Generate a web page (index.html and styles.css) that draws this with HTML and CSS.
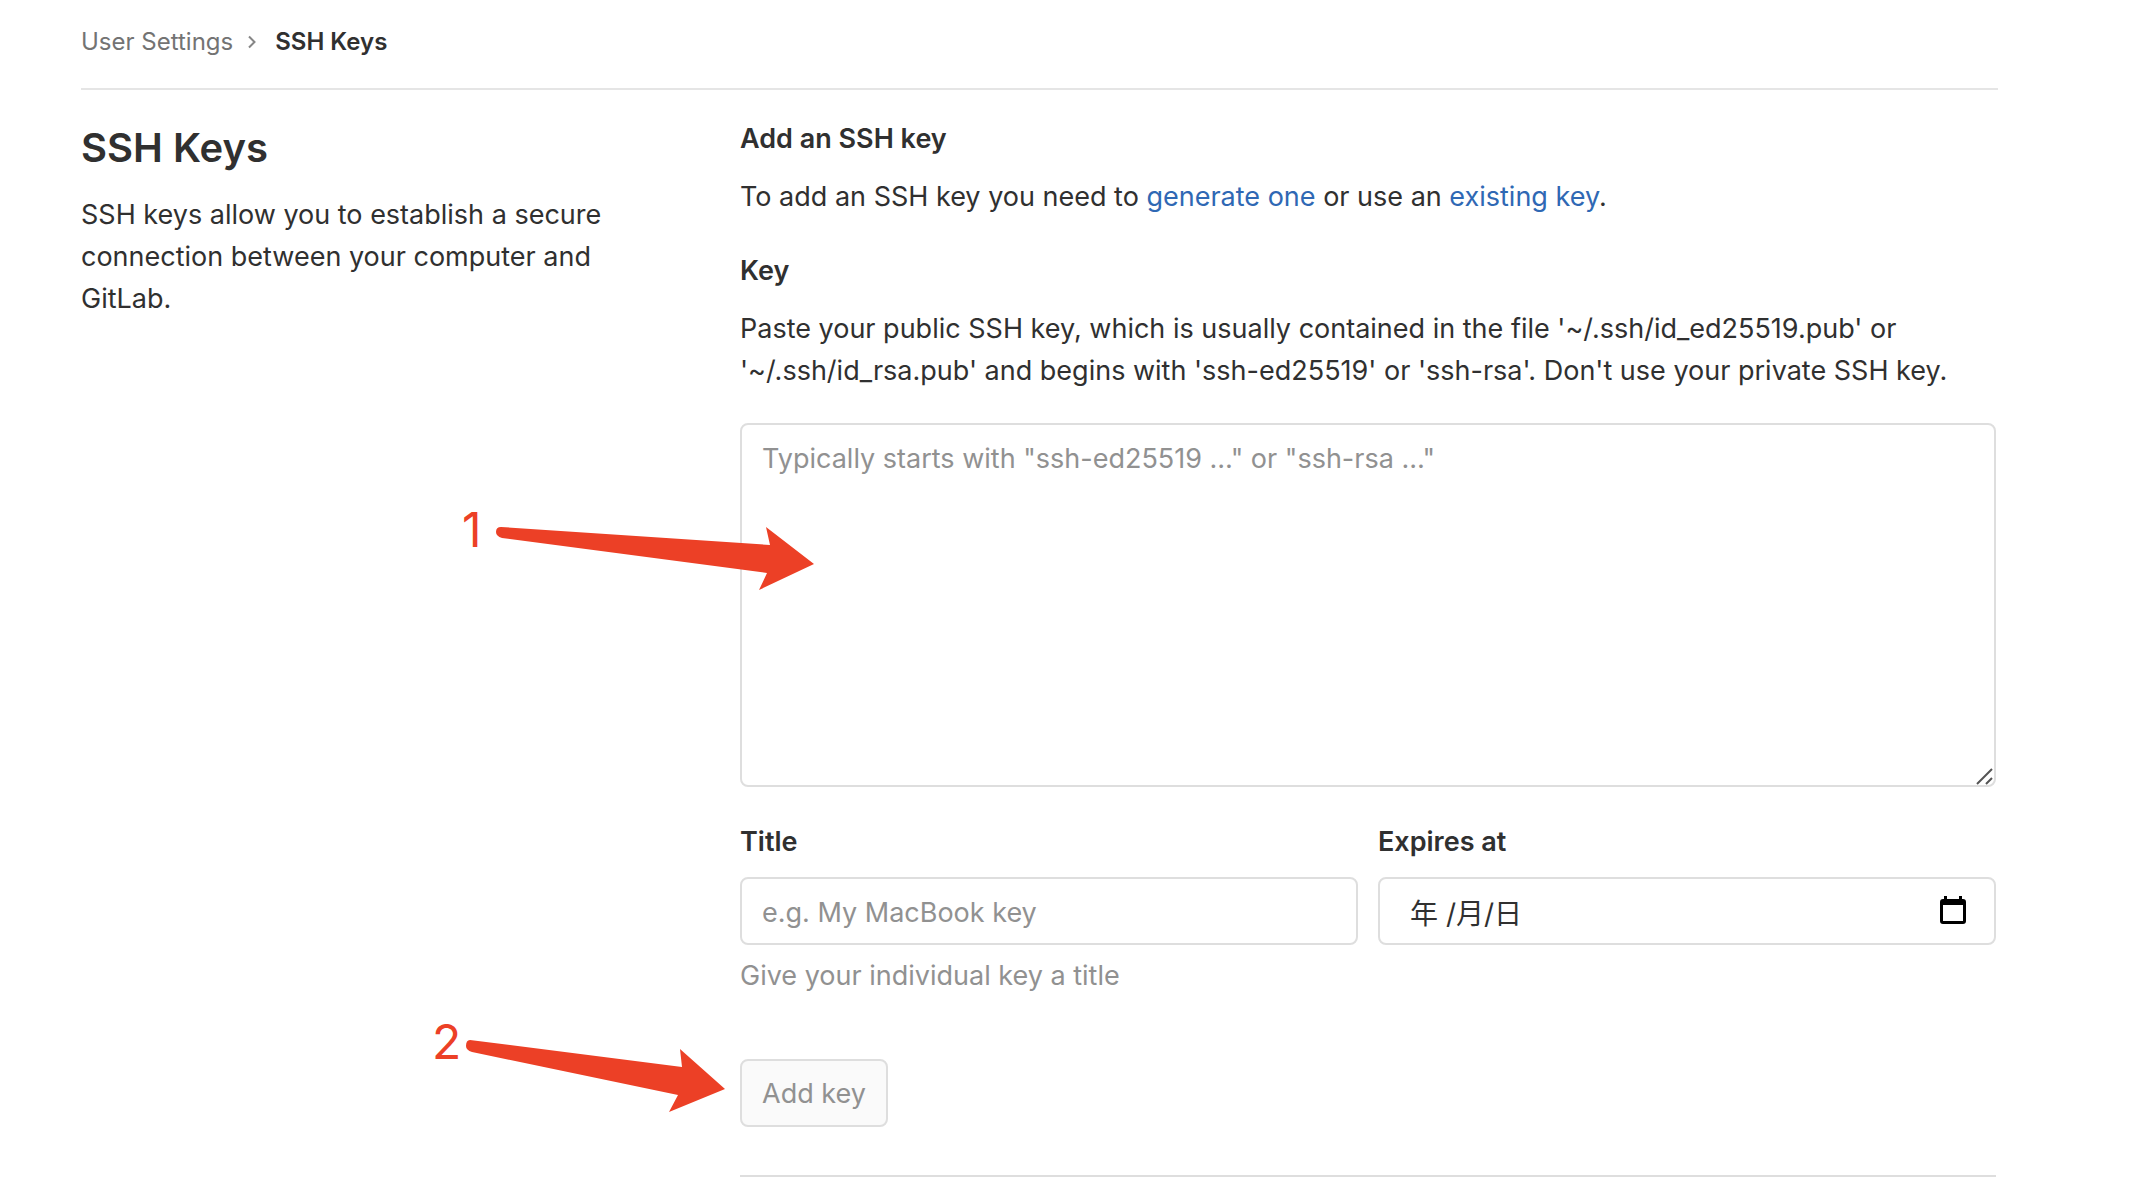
FILE: index.html
```
<!DOCTYPE html>
<html lang="en">
<head>
  <meta charset="UTF-8">
  <title>SSH Keys · User Settings</title>
  <link rel="stylesheet" href="styles.css">
</head>
<body>
  <div class="container">
    <nav class="breadcrumbs">
      <a href="#">User Settings</a>
      <svg class="chevron" viewBox="0 0 10 14" width="10" height="14"><path d="M2 1.5 L7.5 7 L2 12.5"/></svg>
      <a href="#" class="current">SSH Keys</a>
    </nav>

    <main class="settings">
      <aside class="intro">
        <h1>SSH Keys</h1>
        <p>SSH keys allow you to establish a secure connection between your computer and GitLab.</p>
      </aside>

      <section class="content">
        <h2>Add an SSH key</h2>
        <p class="lead">To add an SSH key you need to <a href="#">generate one</a> or use an <a href="#">existing key</a>.</p>

        <form onsubmit="return false;">
          <label for="key">Key</label>
          <p class="hint">Paste your public SSH key, which is usually contained in the file '~/.ssh/id_ed25519.pub' or '~/.ssh/id_rsa.pub' and begins with 'ssh-ed25519' or 'ssh-rsa'. Don't use your private SSH key.</p>
          <div class="key-box">
            <textarea id="key" placeholder="Typically starts with &quot;ssh-ed25519 …&quot; or &quot;ssh-rsa …&quot;"></textarea>
            <svg class="grip" viewBox="0 0 18 18" width="18" height="18"><path d="M1 17 L16 2 M10 17 L16 11"/></svg>
            <svg class="mark mark-key" viewBox="0 0 360 100" width="360" height="100">
              <text x="2" y="46">1</text>
              <path d="M41 26 L310 44 L306 26 L354 63 L299 89 L307 72 L42 37 Q36 35 36 31 Q36 26 41 26 Z"/>
            </svg>
          </div>

          <div class="row">
            <div class="field">
              <label for="title">Title</label>
              <input type="text" id="title" placeholder="e.g. My MacBook key">
              <p class="help">Give your individual key a title</p>
            </div>
            <div class="field">
              <label for="expires">Expires at</label>
              <div class="date">
                <input type="text" id="expires" value="年 /月/日">
                <button type="button" class="picker" aria-label="Calendar">
                  <svg viewBox="0 0 26 28" width="26" height="28">
                    <path fill-rule="evenodd" d="M4 0 H7 V3 H19 V0 H22 V3 H23 Q26 3 26 6 V25 Q26 28 23 28 H3 Q0 28 0 25 V6 Q0 3 3 3 H4 Z M3 9 V25 H23 V9 Z"/>
                  </svg>
                </button>
              </div>
            </div>
          </div>

          <div class="actions">
            <button type="submit" class="add" disabled>Add key</button>
            <svg class="mark mark-add" viewBox="0 0 300 100" width="300" height="100">
              <text x="-2" y="48">2</text>
              <path d="M36 29 L248 56 L246 38 L291 78 L235 101 L244 84 L38 41 Q32 39 32 35 Q32 29 36 29 Z"/>
            </svg>
          </div>
        </form>
        <hr>
      </section>
    </main>
  </div>
</body>
</html>
```
FILE: styles.css
```
* {
  box-sizing: border-box;
}

body {
  margin: 0;
  font-family: Inter, "Noto Sans CJK SC", sans-serif;
  font-size: 27px;
  line-height: 42px;
  color: #303030;
  background: #fff;
}

h1, h2, p {
  margin: 0;
}

a {
  color: #2f68b4;
  text-decoration: none;
}

.container {
  padding: 0 136px 0 81px;
}

.breadcrumbs {
  display: flex;
  align-items: center;
  height: 90px;
  padding-bottom: 4px;
  border-bottom: 2px solid #e5e5e5;
  font-size: 24px;
}

.breadcrumbs a {
  color: #737373;
}

.breadcrumbs .current {
  color: #303030;
  font-weight: 600;
}

.chevron {
  margin: 0 18px 0 14px;
  fill: none;
  stroke: #868686;
  stroke-width: 2;
}

.settings {
  display: grid;
  grid-template-columns: 1fr 2fr;
  gap: 30px;
  padding-top: 28px;
}

.intro {
  padding: 9px 32px 0 0;
}

.content {
  padding-right: 2px;
}

h1 {
  margin-bottom: 25px;
  font-size: 40px;
  font-weight: 600;
}

h2, label {
  display: block;
  margin-bottom: 16px;
  font-size: 27px;
  font-weight: 600;
}

.lead {
  margin-bottom: 32px;
}

.hint {
  margin-bottom: 31px;
}

.key-box, .date, .actions {
  position: relative;
}

textarea, input {
  display: block;
  width: 100%;
  padding: 13px 20px 11px;
  border: 2px solid #dedede;
  border-radius: 8px;
  background: #fff;
  font: inherit;
  color: #303030;
}

textarea {
  height: 364px;
  resize: none;
}

input {
  height: 68px;
}

::placeholder {
  color: #919191;
  opacity: 1;
}

.grip {
  position: absolute;
  right: 2px;
  bottom: 2px;
  fill: none;
  stroke: #555;
  stroke-width: 2;
}

.row {
  display: grid;
  grid-template-columns: 1fr 1fr;
  gap: 20px;
  margin-top: 34px;
}

.field label {
  margin-bottom: 14px;
}

.help {
  margin-top: 10px;
  color: #919191;
}

.date input {
  padding-left: 30px;
  font-size: 28px;
}

.picker {
  position: absolute;
  top: 19px;
  right: 30px;
  padding: 0;
  border: none;
  background: none;
  line-height: 0;
}

.actions {
  margin-top: 62px;
}

.add {
  height: 68px;
  padding: 2px 20px 0;
  border: 2px solid #dedede;
  border-radius: 8px;
  background: #fafafa;
  font: inherit;
  color: #919191;
}

hr {
  margin: 48px 0 0;
  border: none;
  border-top: 2px solid #dedede;
}

/* numbered arrows lying over the form */
.mark {
  position: absolute;
  overflow: visible;
  fill: #ec4026;
  font-size: 48px;
  pointer-events: none;
}

.mark-key {
  top: 78px;
  left: -280px;
}

.mark-add {
  top: -48px;
  left: -306px;
}
```
